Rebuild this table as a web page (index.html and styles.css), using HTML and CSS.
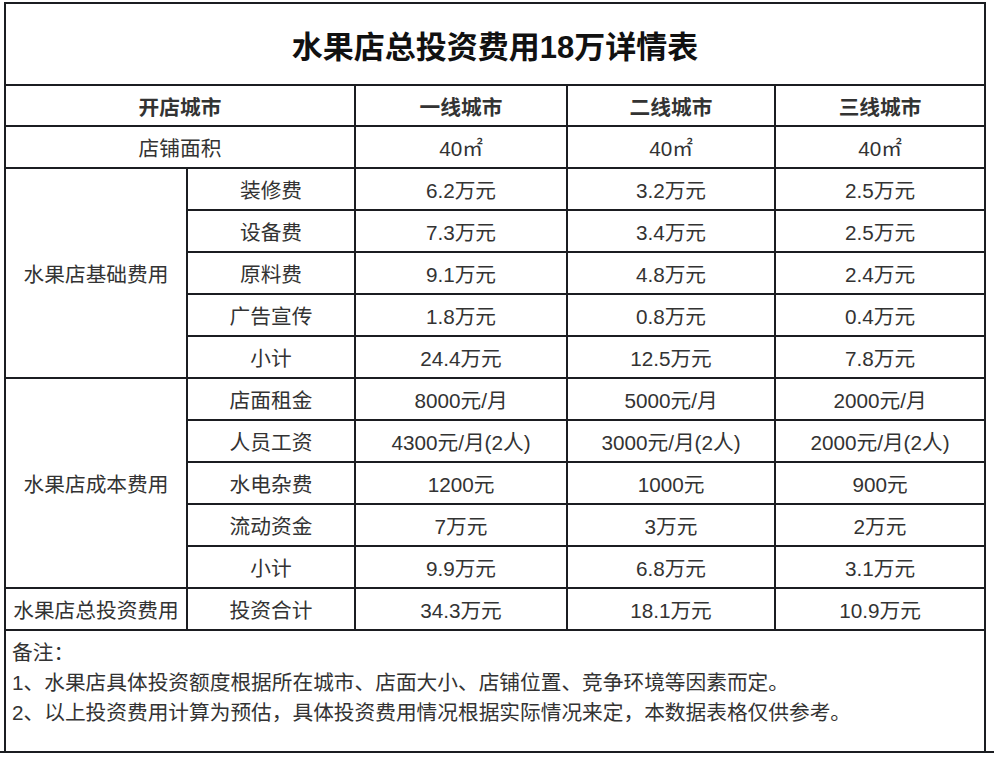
FILE: index.html
```html
<!DOCTYPE html>
<html lang="zh-CN">
<head>
<meta charset="utf-8">
<title>水果店总投资费用18万详情表</title>
<link rel="stylesheet" href="styles.css">
</head>
<body>
<div class="frame">
<table class="sheet">
  <colgroup>
    <col class="c1"><col class="c2"><col class="c3"><col class="c4"><col class="c5">
  </colgroup>
  <tbody>
    <tr class="title-row"><td colspan="5" class="title">水果店总投资费用18万详情表</td></tr>
    <tr class="head-row"><th colspan="2">开店城市</th><th>一线城市</th><th>二线城市</th><th>三线城市</th></tr>
    <tr><td colspan="2">店铺面积</td><td>40㎡</td><td>40㎡</td><td>40㎡</td></tr>
    <tr><td rowspan="5">水果店基础费用</td><td>装修费</td><td>6.2万元</td><td>3.2万元</td><td>2.5万元</td></tr>
    <tr><td>设备费</td><td>7.3万元</td><td>3.4万元</td><td>2.5万元</td></tr>
    <tr><td>原料费</td><td>9.1万元</td><td>4.8万元</td><td>2.4万元</td></tr>
    <tr><td>广告宣传</td><td>1.8万元</td><td>0.8万元</td><td>0.4万元</td></tr>
    <tr><td>小计</td><td>24.4万元</td><td>12.5万元</td><td>7.8万元</td></tr>
    <tr><td rowspan="5">水果店成本费用</td><td>店面租金</td><td>8000元/月</td><td>5000元/月</td><td>2000元/月</td></tr>
    <tr><td>人员工资</td><td>4300元/月(2人)</td><td>3000元/月(2人)</td><td>2000元/月(2人)</td></tr>
    <tr><td>水电杂费</td><td>1200元</td><td>1000元</td><td>900元</td></tr>
    <tr><td>流动资金</td><td>7万元</td><td>3万元</td><td>2万元</td></tr>
    <tr><td>小计</td><td>9.9万元</td><td>6.8万元</td><td>3.1万元</td></tr>
    <tr><td>水果店总投资费用</td><td>投资合计</td><td>34.3万元</td><td>18.1万元</td><td>10.9万元</td></tr>
    <tr class="note-row"><td colspan="5" class="notes">
      <p>备注：</p>
      <p>1、水果店具体投资额度根据所在城市、店面大小、店铺位置、竞争环境等因素而定。</p>
      <p>2、以上投资费用计算为预估，具体投资费用情况根据实际情况来定，本数据表格仅供参考。</p>
    </td></tr>
  </tbody>
</table>
</div>
</body>
</html>
```

FILE: styles.css
```css
html, body {
  margin: 0;
  padding: 0;
  background: #ffffff;
}

body {
  font-family: "Liberation Sans", "Noto Sans CJK SC", sans-serif;
  color: #333333;
}

.frame {
  padding: 2px 0 0 4px;
  border-bottom: 2px solid #1b1d21;
  width: 994px;
  box-sizing: border-box;
}

.sheet {
  border-collapse: collapse;
  table-layout: fixed;
  width: 982px;
  font-size: 20.7px;
  border-bottom: hidden;
}

.c1 { width: 182px; }
.c2 { width: 168px; }
.c3 { width: 212px; }
.c4 { width: 208px; }
.c5 { width: 210px; }

.sheet td,
.sheet th {
  border: 2px solid #1b1d21;
  text-align: center;
  vertical-align: middle;
  padding: 0;
  height: 42px;
  box-sizing: border-box;
  white-space: nowrap;
}

.sheet th {
  font-weight: bold;
  color: #333333;
}

.title-row td {
  height: 82px;
  font-size: 31px;
  font-weight: bold;
  color: #111111;
}

.head-row th {
  height: 41px;
}

.note-row td.notes {
  height: 121px;
  text-align: left;
  vertical-align: top;
  padding: 7px 6px 0 6px;
  border-bottom: none;
}

.notes p {
  margin: 0;
  line-height: 30px;
}
```
